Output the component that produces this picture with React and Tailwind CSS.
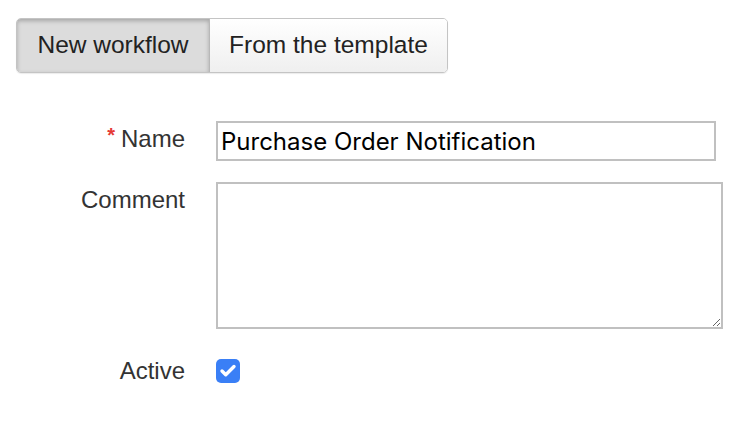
import { Check } from "lucide-react";

export default function App() {
  return (
    <div className="w-[753px] h-[426px] bg-white font-['Liberation_Sans',Arial,sans-serif] text-[#333]">
      <div className="pt-[18px] pl-4 flex">
        <div className="flex h-[55px] rounded-[5px] border border-[#c4c4c4] overflow-hidden shadow-[0_1px_1px_rgba(0,0,0,0.08)]">
          <button className="w-[193px] h-full bg-[#dcdcdc] text-[24.5px] text-[#222] shadow-[inset_0_2px_4px_rgba(0,0,0,0.25)] border-r border-[#b8b8b8]">
            New workflow
          </button>
          <button className="w-[237px] h-full bg-gradient-to-b from-white to-[#efefef] text-[24.5px] text-[#222]">
            From the template
          </button>
        </div>
      </div>

      <div className="mt-[48px] grid grid-cols-[185px_1fr] gap-x-[31px] items-start">
        <label className="h-[35px] flex items-center justify-end text-[24px]">
          <span className="text-[#e53935] text-[20px] font-bold mr-[6px] -mt-[8px]">*</span>
          Name
        </label>
        <input
          defaultValue="Purchase Order Notification"
          className="w-[500px] h-10 border-2 border-[#c0c0c0] px-[3px] text-[24px] text-black font-['Inter',sans-serif] outline-none"
        />

        <label className="mt-[21px] text-right text-[24px]">Comment</label>
        <textarea className="mt-[21px] w-[507px] h-[147px] border-2 border-[#c0c0c0] outline-none resize" />

        <label className="mt-[30px] h-6 flex items-center justify-end text-[24px]">Active</label>
        <div className="mt-[30px] h-6 w-6 rounded-[5px] bg-[#3a7ff6] flex items-center justify-center">
          <Check className="w-[18px] h-[18px] text-white" strokeWidth={4.5} />
        </div>
      </div>
    </div>
  );
}
